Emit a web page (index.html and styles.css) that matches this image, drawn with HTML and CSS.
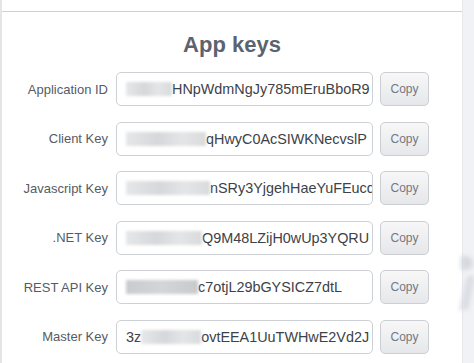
FILE: index.html
```html
<!DOCTYPE html>
<html>

<head>
  <title>App keys</title>
  <link rel="stylesheet" href="styles.css">
</head>

<body>
  <div class="edge"></div>
  <div class="modal">
    <div class="modal-top"></div>
    <div class="modal-body">
      <h1>App keys</h1>
      <div class="key-row">
        <label>Application ID</label>
        <div class="key-input"><span class="blur" style="width: 46px"></span>HNpWdmNgJy785mEruBboR9</div>
        <button class="copy-btn">Copy</button>
      </div>
      <div class="key-row">
        <label>Client Key</label>
        <div class="key-input"><span class="blur" style="width: 80px"></span>qHwyC0AcSIWKNecvslP</div>
        <button class="copy-btn">Copy</button>
      </div>
      <div class="key-row">
        <label>Javascript Key</label>
        <div class="key-input"><span class="blur" style="width: 84px"></span>nSRy3YjgehHaeYuFEucd</div>
        <button class="copy-btn">Copy</button>
      </div>
      <div class="key-row">
        <label>.NET Key</label>
        <div class="key-input"><span class="blur" style="width: 76px"></span>Q9M48LZijH0wUp3YQRU</div>
        <button class="copy-btn">Copy</button>
      </div>
      <div class="key-row">
        <label>REST API Key</label>
        <div class="key-input"><span class="blur soft" style="width: 72px"></span>c7otjL29bGYSICZ7dtL</div>
        <button class="copy-btn">Copy</button>
      </div>
      <div class="key-row">
        <label>Master Key</label>
        <div class="key-input">3z<span class="blur" style="width: 60px"></span>ovtEEA1UuTWHwE2Vd2J</div>
        <button class="copy-btn">Copy</button>
      </div>
    </div>
  </div>
  <div class="backdrop">
    <div class="ghost-top"></div>
    <div class="ghost-slash"></div>
  </div>
</body>

</html>
```

FILE: styles.css
```css
* {
  box-sizing: border-box;
  margin: 0;
  padding: 0;
}

body {
  font-family: 'Liberation Sans', Arial, sans-serif;
  background-color: #f1f2f5;
  display: flex;
  height: 363px;
  overflow: hidden;
}

.edge {
  width: 2px;
  background-color: #e4e5e8;
}

.modal {
  width: 460px;
  background-color: #ffffff;
}

.modal-top {
  height: 12px;
  border-bottom: 1px solid #cfd1d4;
}

h1 {
  color: #5b6370;
  font-size: 22px;
  font-weight: 700;
  text-align: center;
  margin: 20px 0 14px 0;
  line-height: 26px;
}

.key-row {
  display: flex;
  align-items: center;
  height: 34px;
  margin-bottom: 15.6px;
}

.key-row label {
  width: 106px;
  text-align: right;
  font-size: 13px;
  color: #565b63;
  margin-right: 8px;
}

.key-input {
  width: 257px;
  height: 34px;
  border: 1px solid #cdd0d4;
  border-radius: 5px;
  padding: 0 9px;
  font-size: 14.4px;
  color: #3d4148;
  line-height: 32px;
  white-space: nowrap;
  overflow: hidden;
}

.blur {
  display: inline-block;
  height: 14px;
  vertical-align: -2px;
  background: linear-gradient(90deg, #e6e7e9, #d6d7da 40%, #e4e5e7 70%, #d9dadc);
  filter: blur(1.5px);
}

.blur.soft {
  background: linear-gradient(90deg, #c9cbcf, #d4d5d8 50%, #c7c9cc);
}

.copy-btn {
  width: 49px;
  height: 34px;
  margin-left: 7px;
  border: 1px solid #cbced2;
  border-radius: 5px;
  background: linear-gradient(#f7f7f8, #e6e7ea);
  color: #737882;
  font-family: 'Liberation Sans', Arial, sans-serif;
  font-size: 12px;
}

.backdrop {
  flex: 1;
  position: relative;
  border-left: 1px solid #e6e8ec;
}

.ghost-top {
  position: absolute;
  left: -2px;
  top: 256px;
  width: 12px;
  height: 14px;
  border-radius: 0 8px 8px 0;
  background-color: #d6d9de;
  filter: blur(2px);
}

.ghost-slash {
  position: absolute;
  left: 0;
  top: 276px;
  width: 9px;
  height: 34px;
  background-color: #dcdfe4;
  transform: skewX(-12deg);
  filter: blur(2px);
}
```
